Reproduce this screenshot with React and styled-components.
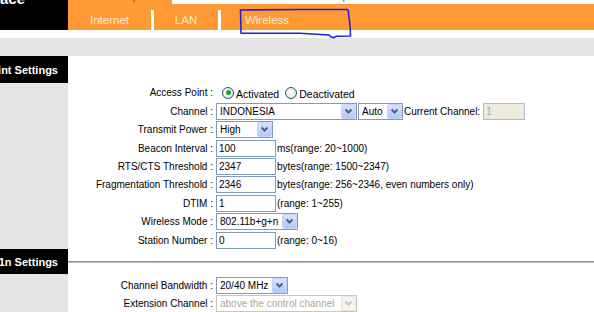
import styled, { createGlobalStyle } from "styled-components";

const Global = createGlobalStyle`
  html, body { margin: 0; padding: 0; background: #fff; }
  body { font-family: "Liberation Sans", Arial, sans-serif; font-size: 10px; color: #000; }
`;

const Page = styled.div`
  position: relative;
  width: 594px;
  height: 312px;
  overflow: hidden;
`;

const Header = styled.div`
  display: grid;
  grid-template-columns: 68px 1fr;
  height: 30px;
`;

const Brand = styled.div`
  background: #000;
  overflow: hidden;
  display: flex;
  justify-content: flex-end;
  padding-right: 43px;
`;

const BrandText = styled.div`
  color: #fff;
  font-weight: bold;
  font-size: 15px;
  line-height: 15px;
  margin-top: -9px;
  white-space: nowrap;
`;

const Nav = styled.div`
  background: #ff9933;
  display: flex;
  flex-direction: column;
`;

const TopStrip = styled.div`
  display: grid;
  grid-template-columns: 104px 1fr;
  height: 4px;
  overflow: hidden;
`;

const TopCell = styled.div`
  background: ${(p) => (p.$white ? "#fff" : "transparent")};
  overflow: hidden;
  padding-left: ${(p) => p.$pad}px;
  white-space: nowrap;
  font-size: 11px;
  line-height: 12px;
  color: #666;
  span { display: block; margin-top: -10px; }
`;

const Tabs = styled.div`
  display: flex;
  margin-top: 6px;
  height: 20px;
`;

const Tab = styled.div`
  width: ${(p) => p.$w}px;
  display: flex;
  align-items: center;
  justify-content: center;
  color: #fdebd3;
  font-size: 11.5px;
`;

const TabSep = styled.div`
  width: 3px;
  background: #fff;
`;

const Gap = styled.div`
  height: 8px;
`;

const Band = styled.div`
  height: 18px;
  background: #e5e5e5;
`;

const Section = styled.div`
  display: grid;
  grid-template-columns: 68px 1fr;
`;

const Side = styled.div`
  background: #e5e5e5;
`;

const Head = styled.div`
  height: ${(p) => p.$h}px;
  background: #000;
  color: #fff;
  font-weight: bold;
  font-size: 11px;
  display: flex;
  align-items: center;
  justify-content: flex-end;
  padding-right: 10px;
  overflow: hidden;
  white-space: nowrap;
`;

const Form = styled.div`
  padding-top: ${(p) => p.$pt || 0}px;
`;

const RuleWrap = styled.div`
  height: 25px;
  display: flex;
  align-items: center;
  padding-bottom: 1.8px;
  box-sizing: content-box;
`;

const Rule = styled.div`
  flex: 1;
  height: 1px;
  border-top: 1px solid #8f8f8f;
  background: #bdbdbd;
`;

const Row = styled.div`
  display: grid;
  grid-template-columns: 145px 1fr;
  column-gap: 3px;
  height: 18.4px;
  align-items: center;
`;

const Label = styled.div`
  text-align: right;
  white-space: nowrap;
`;

const Ctrl = styled.div`
  display: flex;
  align-items: center;
  white-space: nowrap;
`;

const Input = styled.input`
  box-sizing: border-box;
  width: ${(p) => p.$w || 60}px;
  height: 17px;
  margin: 0 1px 0 ${(p) => p.$ml || 0}px;
  padding: 0 2px;
  border: 1px solid ${(p) => (p.disabled ? "#a9bdd6" : "#7f9db9")};
  background: ${(p) => (p.disabled ? "#eeebdc" : "#fff")};
  color: ${(p) => (p.disabled ? "#aca899" : "#000")};
  font: 10px "Liberation Sans", Arial, sans-serif;
  outline: none;
`;

const SelectBox = styled.div`
  box-sizing: border-box;
  width: ${(p) => p.$w}px;
  height: 17px;
  margin-left: ${(p) => p.$ml || 0}px;
  display: flex;
  align-items: center;
  border: 1px solid ${(p) => (p.$off ? "#c9c7ba" : "#7f9db9")};
  color: ${(p) => (p.$off ? "#aca899" : "#000")};
  background: #fff;
`;

const SelectValue = styled.span`
  flex: 1;
  padding-left: 3px;
  overflow: hidden;
`;

const ArrowBox = styled.span`
  box-sizing: border-box;
  width: 15px;
  height: 15px;
  display: flex;
  align-items: center;
  justify-content: center;
  border: 1px solid ${(p) => (p.$off ? "#e6e4da" : "#c3d3fd")};
  border-radius: 2px;
  background: ${(p) =>
    p.$off ? "#f5f4ef" : "linear-gradient(#d7e3fd, #b3c8f7)"};
`;

const Select = ({ w, ml, off, children }) => (
  <SelectBox $w={w} $ml={ml} $off={off}>
    <SelectValue>{children}</SelectValue>
    <ArrowBox $off={off}>
      <svg width="9" height="7" viewBox="0 0 9 7">
        <polyline
          points="1.5,1.5 4.5,4.5 7.5,1.5"
          fill="none"
          stroke={off ? "#c9c7ba" : "#4d6185"}
          strokeWidth="2"
        />
      </svg>
    </ArrowBox>
  </SelectBox>
);

const RadioDot = styled.span`
  box-sizing: border-box;
  width: 12px;
  height: 12px;
  margin: 0 2px 0 ${(p) => p.$ml}px;
  border-radius: 50%;
  border: 1px solid #1c5180;
  background: radial-gradient(circle at 40% 40%, #fff, #dcdcd6);
  display: flex;
  align-items: center;
  justify-content: center;
  &::after {
    content: "";
    width: 5px;
    height: 5px;
    border-radius: 50%;
    background: ${(p) => (p.$on ? "#21a121" : "transparent")};
  }
`;

const Text = styled.span`
  margin-left: ${(p) => p.$ml || 0}px;
`;

const RadioText = styled.span`
  font-size: 10.5px;
  margin-top: 2px;
`;

const Annotation = styled.svg`
  position: absolute;
  left: 0;
  top: 0;
  pointer-events: none;
`;

export default function App() {
  return (
    <Page>
      <Global />
      <Header>
        <Brand>
          <BrandText>Interface</BrandText>
        </Brand>
        <Nav>
          <TopStrip>
            <TopCell $pad={42}>
              <span>Setup</span>
            </TopCell>
            <TopCell $white $pad={96}>
              <span>Advanced Setup</span>
            </TopCell>
          </TopStrip>
          <Tabs>
            <Tab $w={83}>Internet</Tab>
            <TabSep />
            <Tab $w={64}>LAN</Tab>
            <TabSep />
            <Tab $w={92}>Wireless</Tab>
          </Tabs>
        </Nav>
      </Header>
      <Gap />
      <Band />

      <Section>
        <Side>
          <Head $h={27}>Access Point Settings</Head>
        </Side>
        <Form $pt={27.8}>
          <Row>
            <Label>Access Point :</Label>
            <Ctrl>
              <RadioDot $on $ml={6} />
              <RadioText>Activated</RadioText>
              <RadioDot $ml={6} />
              <RadioText>Deactivated</RadioText>
            </Ctrl>
          </Row>
          <Row>
            <Label>Channel :</Label>
            <Ctrl>
              <Select w={141}>INDONESIA</Select>
              <Select w={45} ml={1}>Auto</Select>
              <Text $ml={1}>Current Channel:</Text>
              <Input $w={42} $ml={3} disabled value="1" readOnly />
            </Ctrl>
          </Row>
          <Row>
            <Label>Transmit Power :</Label>
            <Ctrl>
              <Select w={57}>High</Select>
            </Ctrl>
          </Row>
          <Row>
            <Label>Beacon Interval :</Label>
            <Ctrl>
              <Input value="100" readOnly />
              <Text>ms(range: 20~1000)</Text>
            </Ctrl>
          </Row>
          <Row>
            <Label>RTS/CTS Threshold :</Label>
            <Ctrl>
              <Input value="2347" readOnly />
              <Text>bytes(range: 1500~2347)</Text>
            </Ctrl>
          </Row>
          <Row>
            <Label>Fragmentation Threshold :</Label>
            <Ctrl>
              <Input value="2346" readOnly />
              <Text>bytes(range: 256~2346, even numbers only)</Text>
            </Ctrl>
          </Row>
          <Row>
            <Label>DTIM :</Label>
            <Ctrl>
              <Input value="1" readOnly />
              <Text>(range: 1~255)</Text>
            </Ctrl>
          </Row>
          <Row>
            <Label>Wireless Mode :</Label>
            <Ctrl>
              <Select w={82}>802.11b+g+n</Select>
            </Ctrl>
          </Row>
          <Row>
            <Label>Station Number :</Label>
            <Ctrl>
              <Input value="0" readOnly />
              <Text>(range: 0~16)</Text>
            </Ctrl>
          </Row>
        </Form>
      </Section>

      <Section>
        <Side>
          <Head $h={25}>802.11n Settings</Head>
        </Side>
        <Form>
          <RuleWrap>
            <Rule />
          </RuleWrap>
          <Row>
            <Label>Channel Bandwidth :</Label>
            <Ctrl>
              <Select w={72}>20/40 MHz</Select>
            </Ctrl>
          </Row>
          <Row>
            <Label>Extension Channel :</Label>
            <Ctrl>
              <Select w={141} off>
                above the control channel
              </Select>
            </Ctrl>
          </Row>
        </Form>
      </Section>

      <Annotation width="594" height="42" viewBox="0 0 594 42">
        <path
          d="M240.5,10 L300,9.5 L347,9.5 Q349,10 348.5,14 L350,25 L350.5,36 L336,36.3 L334,37.6 L331,37 L329,35 L300,33.2 L241,33.2 Z"
          fill="none"
          stroke="#1f1fe6"
          strokeWidth="1.6"
          strokeLinejoin="round"
        />
      </Annotation>
    </Page>
  );
}
